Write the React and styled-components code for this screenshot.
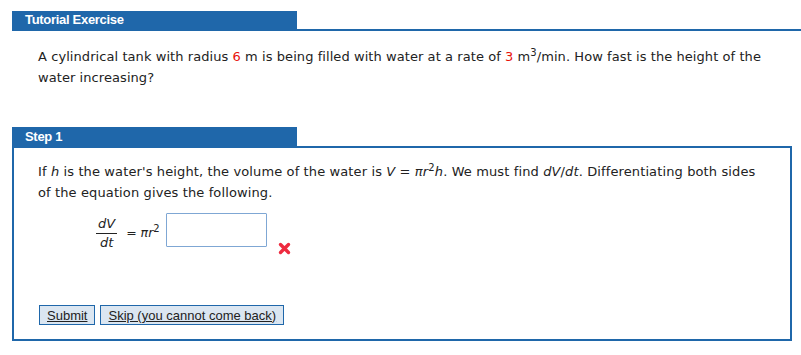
import React from 'react'
import styled, { createGlobalStyle } from 'styled-components'

const blue = '#1f67aa'

const GlobalStyle = createGlobalStyle`
  body {
    margin: 0;
    background: #fff;
    font-family: "DejaVu Sans", Verdana, sans-serif;
    color: #222;
  }
`

const Page = styled.div`
  width: 801px;
  padding-top: 11px;
`

const Section = styled.section`
  margin: ${p => p.$top || 0}px ${p => p.$right || 0}px 0 12px;
`

const HeaderRow = styled.div`
  display: flex;
  border-bottom: ${p => (p.$line ? `2px solid ${blue}` : 'none')};
`

const Tab = styled.div`
  width: 272px;
  height: ${p => p.$h}px;
  padding-left: 13px;
  background: ${blue};
  color: #fff;
  font-family: "Liberation Sans", Arial, sans-serif;
  font-weight: bold;
  font-size: 13px;
  letter-spacing: -0.3px;
  line-height: ${p => p.$h}px;
`

const Text = styled.p`
  margin: 0;
  font-size: 13px;
  letter-spacing: ${p => p.$ls || 0.07}px;
  line-height: 21px;
`

const Question = styled(Text)`
  padding: 15px 26px 0 26px;
`

const Red = styled.span`
  color: #e8120c;
`

const Sup = styled.sup`
  font-size: 10px;
  line-height: 0;
  vertical-align: 5px;
`

const Box = styled.div`
  border: 2px solid ${blue};
  padding: 13px 20px 14px 24px;
`

const StepText = styled(Text)`
  padding-right: 12px;
`

const EquationRow = styled.div`
  display: flex;
  align-items: flex-start;
  margin: 10px 0 0 58px;
  height: 34px;
`

const Fraction = styled.div`
  display: flex;
  flex-direction: column;
  align-items: center;
  font-style: italic;
  font-size: 13px;
  line-height: 14px;
  margin-top: 4px;
`

const Numer = styled.span`
  padding: 0 2px 2px;
  border-bottom: 1px solid #222;
`

const Denom = styled.span`
  padding-top: 2px;
`

const Rhs = styled.span`
  font-size: 12.5px;
  margin: 13px 6px 0 9px;
  line-height: 14px;
`

const Input = styled.input`
  box-sizing: border-box;
  width: 101px;
  height: 34px;
  border: 1px solid #7fa7d4;
  border-radius: 1px;
  margin: 0;
  outline: none;
`

const Wrong = styled.svg`
  width: 13px;
  height: 13px;
  margin: 29px 0 0 11px;
`

const Buttons = styled.div`
  display: flex;
  gap: 5px;
  margin-top: 58px;
  margin-left: 1px;
`

const Button = styled.button`
  height: 20px;
  padding: 0 7px;
  background: #dbe6f1;
  border: 1.5px solid ${blue};
  font-family: "Liberation Sans", Arial, sans-serif;
  font-size: 13px;
  color: #222;
  text-decoration: underline;
  cursor: pointer;
`

const App = () => (
  <Page>
    <GlobalStyle />
    <Section>
      <HeaderRow $line>
        <Tab $h={18}>Tutorial Exercise</Tab>
      </HeaderRow>
      <Question>
        A cylindrical tank with radius <Red>6</Red> m is being filled with water at a rate of{' '}
        <Red>3</Red> m<Sup>3</Sup>/min. How fast is the height of the water increasing?
      </Question>
    </Section>

    <Section $right={9} $top={39}>
      <HeaderRow>
        <Tab $h={19}>Step 1</Tab>
      </HeaderRow>
      <Box>
        <StepText $ls={0.12}>
          If <i>h</i> is the water's height, the volume of the water is <i>V</i> = <i>πr</i>
          <Sup>2</Sup>
          <i>h</i>. We must find <i>dV</i>/<i>dt</i>. Differentiating both sides
          <br />
          of the equation gives the following.
        </StepText>
        <EquationRow>
          <Fraction>
            <Numer>dV</Numer>
            <Denom>dt</Denom>
          </Fraction>
          <Rhs>
            = <i>πr</i>
            <Sup>2</Sup>
          </Rhs>
          <Input type="text" />
          <Wrong viewBox="0 0 13 13">
            <path d="M2.5 2.5 L10.5 10.5 M10.5 2.5 L2.5 10.5" stroke="#ee2b3f" strokeWidth="3.4" strokeLinecap="round" />
          </Wrong>
        </EquationRow>
        <Buttons>
          <Button>Submit</Button>
          <Button>Skip (you cannot come back)</Button>
        </Buttons>
      </Box>
    </Section>
  </Page>
)

export default App
